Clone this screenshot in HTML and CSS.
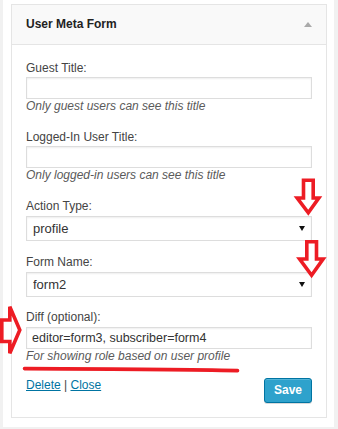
FILE: index.html
```html
<!DOCTYPE html>
<html>
<head>
<meta charset="utf-8">
<link rel="stylesheet" href="styles.css">
</head>
<body>
<div class="panel">
  <div class="box">
    <div class="box-head">
      <span class="box-title">User Meta Form</span>
      <span class="toggle"></span>
    </div>
    <div class="box-body">
      <div class="field">
        <label class="lbl">Guest Title:</label>
        <input class="txt" type="text" value="">
        <p class="help">Only guest users can see this title</p>
      </div>
      <div class="field">
        <label class="lbl">Logged-In User Title:</label>
        <input class="txt" type="text" value="">
        <p class="help">Only logged-in users can see this title</p>
      </div>
      <div class="field field-select first-select">
        <label class="lbl">Action Type:</label>
        <div class="sel"><select><option>profile</option></select></div>
      </div>
      <div class="field field-select">
        <label class="lbl">Form Name:</label>
        <div class="sel"><select><option>form2</option></select></div>
      </div>
      <div class="field field-diff">
        <label class="lbl">Diff (optional):</label>
        <input class="txt" type="text" value="editor=form3, subscriber=form4">
        <p class="help">For showing role based on user profile</p>
      </div>
      <div class="actions">
        <div class="links"><a href="#">Delete</a> | <a href="#">Close</a></div>
        <button class="save" type="button">Save</button>
      </div>
    </div>
  </div>
</div>
<svg class="marks" width="338" height="429" viewBox="0 0 338 429">
  <polygon points="303.5,180.2 313.2,180.2 313.2,198 318.8,198 308.3,212.8 297.2,198 303.5,198" />
  <polygon points="306.8,241.8 316.5,241.8 316.5,259 323.1,259 311.6,275.2 299.6,259 306.8,259" />
  <polygon points="1.8,320 9.8,320 9.8,306.8 19.8,330 9.8,353.2 9.8,341.5 1.8,341.5" />
  <path class="line" d="M24.5,368.6 C80,368.8 180,369.2 237.5,370.6" />
</svg>
</body>
</html>
```

FILE: styles.css
```css
html, body {
  margin: 0;
  padding: 0;
}
body {
  background: #f1f1f1;
  font-family: "Liberation Sans", Arial, sans-serif;
  font-size: 12px;
  color: #444;
  position: relative;
  width: 338px;
  height: 429px;
  overflow: hidden;
}
.panel {
  background: #fff;
  margin-left: 3px;
  width: 331px;
  box-sizing: border-box;
  padding: 4px 0 9px 8px;
}
.box {
  width: 316px;
  box-sizing: border-box;
  border: 1px solid #e5e5e5;
  background: #fff;
}
.box-head {
  height: 39px;
  background: #f9f9f9;
  border-bottom: 1px solid #e5e5e5;
  padding: 0 14px;
  display: flex;
  align-items: center;
  justify-content: space-between;
}
.box-title {
  font-weight: bold;
  font-size: 12px;
  line-height: 39px;
  color: #222;
}
.toggle {
  width: 0;
  height: 0;
  border-left: 4px solid transparent;
  border-right: 4px solid transparent;
  border-bottom: 5px solid #aaa;
}
.box-body {
  padding: 15px 14px 14px;
}
.field {
  margin-bottom: 16px;
}
.field-select.first-select {
  margin-bottom: 13px;
}
.field-select {
  margin-bottom: 12px;
}
.field-diff {
  margin-bottom: 15px;
}
.lbl {
  display: block;
  line-height: 16px;
  margin-bottom: 1px;
  color: #444;
}
.field-select .lbl,
.field-diff .lbl {
  margin-bottom: 2px;
}
.txt {
  display: block;
  width: 100%;
  height: 22px;
  box-sizing: border-box;
  margin: 0;
  border: 1px solid #ddd;
  box-shadow: inset 0 1px 2px rgba(0, 0, 0, 0.07);
  padding: 0 5px;
  font-family: "Liberation Sans", Arial, sans-serif;
  font-size: 12.5px;
  color: #333;
  background: #fff;
  outline: none;
}
.help {
  margin: 0;
  font-style: italic;
  line-height: 14px;
  color: #5a5a5a;
}
.sel {
  position: relative;
}
.sel select {
  display: block;
  width: 100%;
  height: 25px;
  box-sizing: border-box;
  margin: 0;
  border: 1px solid #ddd;
  border-radius: 0;
  box-shadow: inset 0 1px 2px rgba(0, 0, 0, 0.07);
  padding: 0 6px;
  -webkit-appearance: none;
  appearance: none;
  background: #fff;
  font-family: "Liberation Sans", Arial, sans-serif;
  font-size: 13px;
  color: #333;
  outline: none;
}
.sel::after {
  content: "";
  position: absolute;
  right: 7px;
  top: 10px;
  width: 0;
  height: 0;
  border-left: 3.5px solid transparent;
  border-right: 3.5px solid transparent;
  border-top: 5px solid #111;
}
.actions {
  display: flex;
  justify-content: space-between;
  align-items: flex-start;
}
.links {
  line-height: 14px;
  color: #444;
}
.links a {
  color: #0074a2;
  text-decoration: underline;
}
.save {
  width: 48px;
  height: 25px;
  box-sizing: border-box;
  margin: 0;
  padding: 0;
  border: 1px solid #0074a2;
  border-radius: 3px;
  background: #2ea2cc;
  box-shadow: inset 0 1px 0 rgba(120, 200, 230, 0.5), 0 1px 0 rgba(0, 0, 0, 0.15);
  color: #fff;
  font-family: "Liberation Sans", Arial, sans-serif;
  font-size: 12px;
  font-weight: bold;
  line-height: 23px;
}
.marks {
  position: absolute;
  left: 0;
  top: 0;
  pointer-events: none;
}
.marks polygon {
  fill: none;
  stroke: #ed1c24;
  stroke-width: 3.6;
  stroke-linejoin: miter;
}
.marks .line {
  fill: none;
  stroke: #ed1c24;
  stroke-width: 3.6;
  stroke-linecap: round;
}
```
